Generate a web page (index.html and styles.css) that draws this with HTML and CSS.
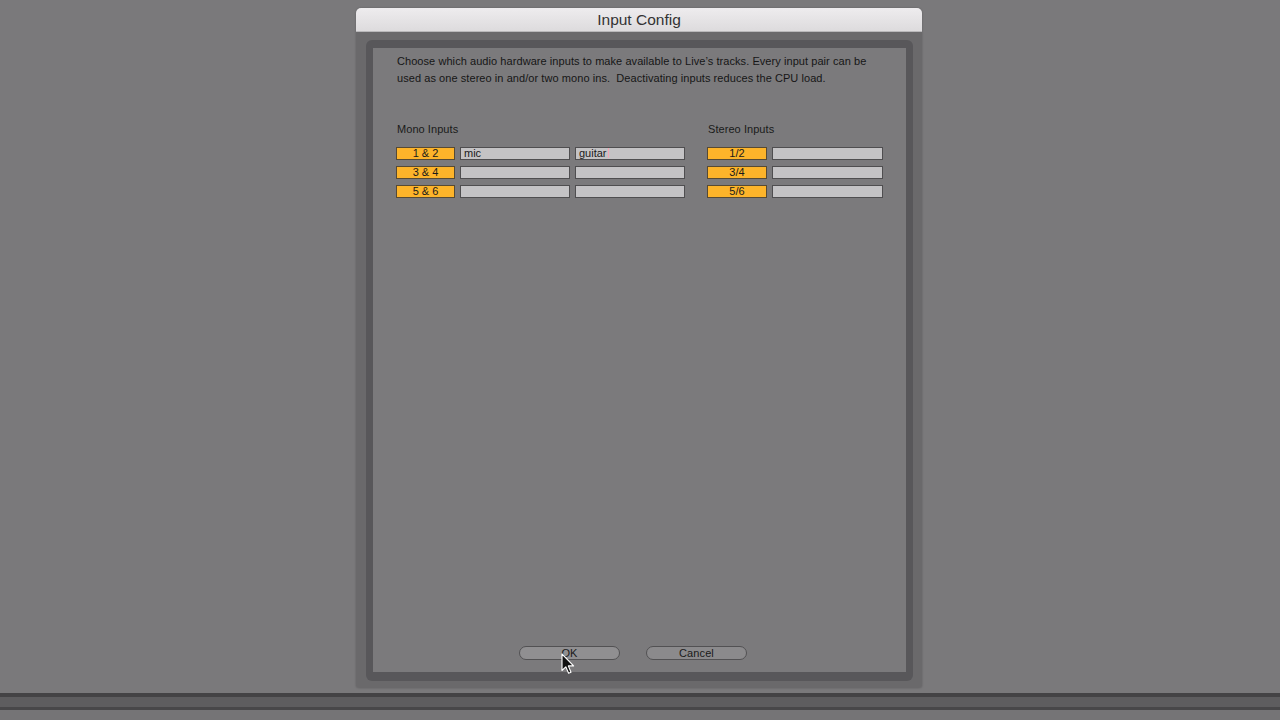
FILE: index.html
```html
<!DOCTYPE html>
<html lang="en">
<head>
<meta charset="utf-8">
<title>Input Config</title>
<link rel="stylesheet" href="styles.css">
</head>
<body>
<div class="screen">
  <div class="dialog">
    <div class="titlebar">Input Config</div>
    <div class="dialog-body">
      <div class="frame">
        <div class="content">
          <p class="desc">Choose which audio hardware inputs to make available to Live’s tracks. Every input pair can be<br>used as one stereo in and/or two mono ins.&nbsp; Deactivating inputs reduces the CPU load.</p>
          <div class="sections">
            <div class="section mono">
              <div class="label">Mono Inputs</div>
              <div class="rows">
                <div class="row"><div class="tog">1 &amp; 2</div><div class="field">mic</div><div class="field">guitar<span class="caret"></span></div></div>
                <div class="row"><div class="tog">3 &amp; 4</div><div class="field"></div><div class="field"></div></div>
                <div class="row"><div class="tog">5 &amp; 6</div><div class="field"></div><div class="field"></div></div>
              </div>
            </div>
            <div class="section stereo">
              <div class="label">Stereo Inputs</div>
              <div class="rows">
                <div class="row"><div class="tog">1/2</div><div class="field wide"></div></div>
                <div class="row"><div class="tog">3/4</div><div class="field wide"></div></div>
                <div class="row"><div class="tog">5/6</div><div class="field wide"></div></div>
              </div>
            </div>
          </div>
          <div class="buttons">
            <div class="btn hover">OK</div>
            <div class="btn">Cancel</div>
          </div>
        </div>
      </div>
    </div>
  </div>
  <div class="bands">
    <div class="band b1"></div>
    <div class="band b2"></div>
    <div class="band b3"></div>
    <div class="band b4"></div>
  </div>
  <svg class="cursor" width="15" height="22" viewBox="0 0 15 22"><path d="M1 1 L1 17.5 L4.8 13.8 L7.6 20.2 L10 19.2 L7.3 12.9 L12.6 12.9 Z" fill="#111" stroke="#fff" stroke-width="1.1" stroke-linejoin="round"/></svg>
</div>
</body>
</html>
```
FILE: styles.css
```css
* { box-sizing: border-box; }
html, body { margin: 0; padding: 0; }
body {
  background: #7a797b;
  font-family: "Liberation Sans", Arial, sans-serif;
  color: #1d1d1d;
}
.screen {
  position: relative;
  width: 1280px;
  height: 720px;
  overflow: hidden;
  display: flex;
  flex-direction: column;
  background: #7a797b;
}
.dialog {
  margin: 8px 0 0 356px;
  width: 566px;
  height: 680px;
  display: flex;
  flex-direction: column;
  border-radius: 5px 5px 3px 3px;
  overflow: hidden;
  box-shadow: 0 0 2px rgba(0,0,0,0.25);
}
.titlebar {
  height: 24px;
  flex: none;
  background: linear-gradient(#eeecee, #dddbdd);
  border-bottom: 1px solid #b9b8ba;
  text-align: center;
  font-size: 15.5px;
  line-height: 24px;
  color: #333;
}
.dialog-body {
  flex: 1;
  background: #6a696b;
  padding: 8px 9px 7px 10px;
  display: flex;
}
.frame {
  flex: 1;
  background: #58575a;
  border-radius: 6px;
  padding: 8px 7px 9px 7px;
  display: flex;
}
.content {
  flex: 1;
  background: #7b7a7c;
  display: flex;
  flex-direction: column;
  padding: 5px 0 12px 23px;
}
.desc {
  margin: 0 0 0 1px;
  font-size: 11px;
  line-height: 17px;
  letter-spacing: 0.065px;
  color: #161616;
}
.sections {
  margin-top: 34px;
  display: flex;
  gap: 22px;
}
.label {
  font-size: 11px;
  line-height: 17px;
  letter-spacing: 0.06px;
  margin-left: 1px;
  color: #1a1a1a;
}
.rows {
  margin-top: 9px;
  display: flex;
  flex-direction: column;
  gap: 6px;
}
.row {
  display: flex;
  gap: 5px;
  height: 13px;
}
.tog {
  width: 59px;
  height: 13px;
  background: #fdb42a;
  border: 1px solid #574a33;
  font-size: 11px;
  line-height: 11px;
  text-align: center;
  color: #1a1a1a;
}
.stereo .tog { width: 60px; }
.field {
  width: 110px;
  height: 13px;
  background: #c4c3c5;
  border: 1px solid #4f4e50;
  font-size: 11px;
  line-height: 11px;
  padding-left: 3px;
  color: #1a1a1a;
}
.field.wide { width: 111px; }
.caret {
  display: inline-block;
  width: 1px;
  height: 10px;
  background: #f3a5b5;
  vertical-align: -1px;
  margin-left: 1px;
}
.buttons {
  margin-top: auto;
  display: flex;
  gap: 26px;
  padding-left: 123px;
}
.btn {
  width: 101px;
  height: 14px;
  border: 1px solid #525153;
  border-radius: 7px;
  background: #8b8a8c;
  font-size: 11px;
  line-height: 12px;
  letter-spacing: 0.1px;
  text-align: center;
  color: #1a1a1a;
}
.btn.hover { background: #908f91; }
.bands {
  margin-top: 5px;
  display: flex;
  flex-direction: column;
}
.band { width: 1280px; }
.b1 { height: 4px; background: #444345; }
.b2 { height: 10px; background: #5e5d5f; }
.b3 { height: 3px; background: #484749; }
.b4 { height: 10px; background: #757476; }
.cursor {
  position: absolute;
  left: 561px;
  top: 653px;
}
```
